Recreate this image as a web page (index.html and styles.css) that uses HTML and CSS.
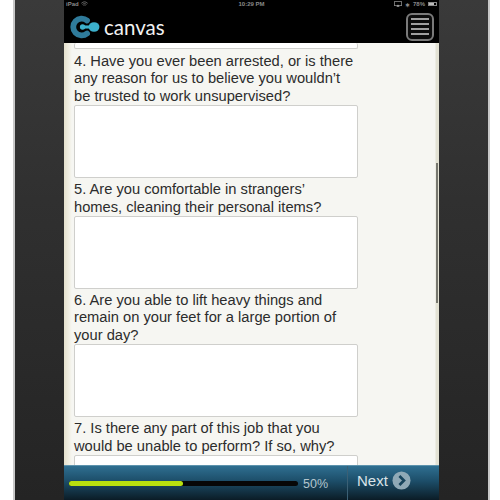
FILE: index.html
```html
<!DOCTYPE html>
<html lang="en">
<head>
<meta charset="utf-8">
<title>Canvas</title>
<link rel="stylesheet" href="styles.css">
</head>
<body>
<div class="tablet">
  <div class="bezel bezel-left"></div>
  <main class="screen">
    <div class="status">
      <span class="status-left">iPad
        <svg class="wifi" viewBox="0 0 10 8"><path d="M0.5 3a6.5 6.5 0 0 1 9 0M2 4.6a4.3 4.3 0 0 1 6 0M3.6 6.1a2 2 0 0 1 2.8 0" fill="none" stroke="#8a8a8a" stroke-width="1"/></svg>
      </span>
      <span class="status-time">10:29 PM</span>
      <span class="status-right">
        <svg class="air" viewBox="0 0 10 7"><rect x="0.5" y="0.5" width="9" height="5" fill="none" stroke="#888"/><path d="M3 7l2-3 2 3z" fill="#aaa"/></svg>
        <span class="bt">∗</span>
        <span>78%</span>
        <span class="battery"><span class="battery-fill"></span></span>
      </span>
    </div>
    <header class="topbar">
      <div class="brand">
        <svg class="logo" viewBox="0 0 32 24">
          <path d="M17.6 5.3A8.7 8.7 0 1 0 17.6 18.7" fill="none" stroke="#2f7b9b" stroke-width="6" stroke-linecap="round"/>
          <circle cx="13" cy="12" r="2.8" fill="#3cb0cc"/>
          <path d="M13 12h9" stroke="#3cb0cc" stroke-width="3.2"/>
          <ellipse cx="24.8" cy="12" rx="5.6" ry="5" fill="#3cb0cc"/>
        </svg>
        <span class="wordmark">canvas</span>
      </div>
      <div class="menu"><span></span><span></span><span></span><span></span></div>
    </header>
    <div class="content">
      <div class="field first"></div>
      <p class="q">4. Have you ever been arrested, or is there any reason for us to believe you wouldn’t be trusted to work unsupervised?</p>
      <div class="field"></div>
      <p class="q">5. Are you comfortable in strangers’ homes, cleaning their personal items?</p>
      <div class="field"></div>
      <p class="q">6. Are you able to lift heavy things and remain on your feet for a large portion of your day?</p>
      <div class="field"></div>
      <p class="q">7. Is there any part of this job that you would be unable to perform? If so, why?</p>
      <div class="field"></div>
      <div class="scrollbar"></div>
    </div>
    <footer class="bottombar">
      <div class="progress">
        <div class="track"><div class="fill"></div></div>
        <span class="pct">50%</span>
      </div>
      <div class="next">
        <span>Next</span>
        <svg class="next-icon" viewBox="0 0 20 20"><circle cx="10" cy="10" r="9.5" fill="#8fa9b6"/><path d="M7.8 5.2l4.8 4.8-4.8 4.8" fill="none" stroke="#17445c" stroke-width="2.8"/></svg>
      </div>
    </footer>
  </main>
  <div class="bezel bezel-right"></div>
</div>
</body>
</html>
```
FILE: styles.css
```css
html, body { margin: 0; padding: 0; height: 500px; overflow: hidden; background: #fff; }
body { font-family: "Liberation Sans", Arial, sans-serif; }
.tablet {
  margin-left: 13px; width: 477px; height: 500px;
  display: grid; grid-template-columns: 51px 375px 51px;
  background: #c8c8c8;
}
.bezel { background: linear-gradient(#3a3a3a, #303030 40%, #242424 100%); }
.bezel-left { margin-left: 2px; }
.bezel-right { margin-right: 2px; }
.screen { display: flex; flex-direction: column; height: 500px; overflow: hidden; background: #000; }
.status { flex: none; display: flex; align-items: center; justify-content: space-between; padding: 0 2px 2px 2px; box-sizing: border-box; height: 10px; font-size: 6px; color: #8a8a8a; position: relative; }
.status-left { display: flex; align-items: center; gap: 2px; font-weight: bold; }
.wifi { width: 7px; height: 6px; }
.status-time { position: absolute; left: 0; right: 0; top: 0; text-align: center; font-weight: bold; line-height: 9px; }
.status-right { display: flex; align-items: center; gap: 3px; font-weight: bold; }
.air { width: 8px; height: 6px; }
.bt { font-size: 6px; }
.battery { width: 9px; height: 4px; border: 1px solid #888; box-sizing: border-box; display: block; }
.battery-fill { display: block; width: 70%; height: 100%; background: #bbb; }
.topbar { height: 33px; flex: none; display: flex; align-items: center; justify-content: space-between; padding: 0 5px 0 6px; }
.brand { display: flex; align-items: center; gap: 3px; }
.logo { width: 31px; height: 24px; }
.wordmark { font-family: Lato, "Open Sans", sans-serif; font-weight: 400; font-size: 20.5px; color: #f2f2f2; line-height: 24px; }
.menu {
  width: 28px; height: 28px; box-sizing: border-box; border: 2px solid #7a7a7a; border-radius: 6px;
  display: flex; flex-direction: column; justify-content: center; gap: 3px; padding: 0 3px; background: #0c0c0c;
}
.menu span { display: block; height: 2px; background: #a0a0a0; }
.content {
  flex: 1; min-height: 0; overflow: hidden; position: relative;
  background: linear-gradient(90deg, #e4e0cc 0, #f0eee2 5px, #f6f6f2 8px, #f6f6f2 371px, #e3e2d4 372px);
  padding: 0 0 0 10px;
}
.field { width: 284px; height: 73px; box-sizing: border-box; background: #fff; border: 1px solid #cfcfcc; border-radius: 2px; margin-bottom: 3px; }
.field.first { height: 6px; border-top: 0; margin-bottom: 4px; }
.q { margin: 0; width: 280px; font-size: 14.7px; line-height: 17.4px; color: #2c2c2c; }
.scrollbar { position: absolute; right: 1px; top: 120px; width: 2px; height: 140px; background: #77776f; }
.bottombar {
  height: 35px; flex: none; display: flex;
  background: linear-gradient(#2f6f91, #1c4d68 45%, #0b1c26 100%); border-top: 1px solid #5d93ad; box-sizing: border-box;
}
.progress { width: 283px; display: flex; align-items: center; padding: 0 0 0 5px; gap: 5px; box-sizing: border-box; }
.track { width: 229px; height: 5px; background: #070707; border-radius: 3px; flex: none; }
.fill { width: 114px; height: 100%; background: #b8e00f; border-radius: 3px; }
.pct { font-size: 12.5px; color: #b5c5cd; padding-top: 2px; }
.next { flex: 1; border-left: 1px solid #3b6075; display: flex; align-items: center; gap: 4px; padding: 0 0 6px 9px; font-size: 15px; color: #dbe4e8; }
.next-icon { width: 19px; height: 19px; }
```
